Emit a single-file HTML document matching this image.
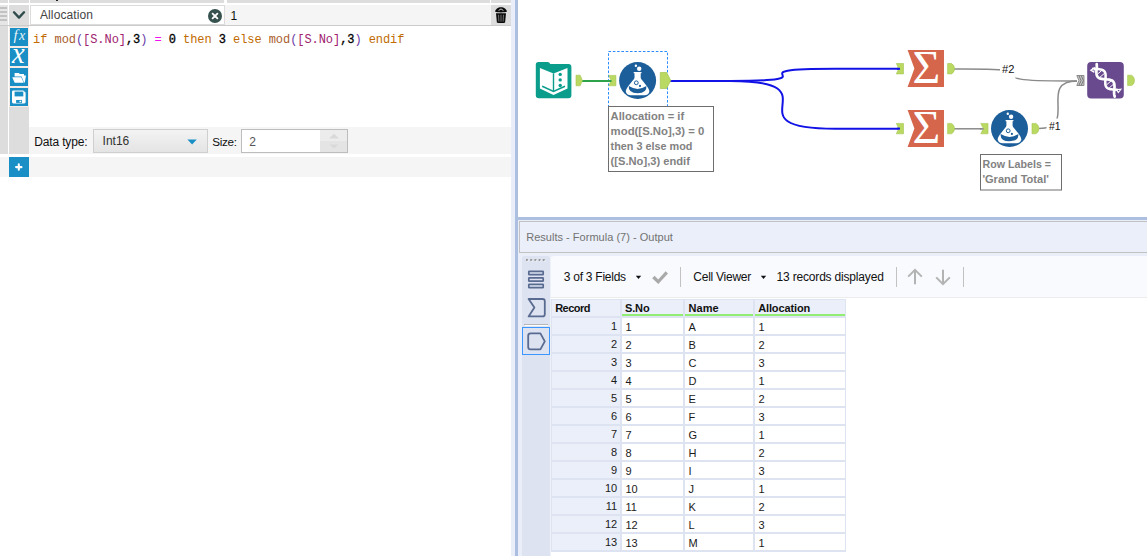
<!DOCTYPE html>
<html lang="en">
<head>
<meta charset="utf-8">
<title>Formula (7) - Configuration</title>
<style>
html,body{margin:0;padding:0;}
body{width:1147px;height:556px;position:relative;overflow:hidden;background:#fff;
  font-family:"Liberation Sans",sans-serif;font-size:12px;color:#1a1a1a;}
.a{position:absolute;}
.t{position:absolute;white-space:nowrap;line-height:16px;}
.g{background:#dddddd;}
.btn{position:absolute;left:9px;width:18px;height:18px;border:1px solid #f7ebe5;background:#1a8fc6;}
.code{font-family:"Liberation Mono",monospace;font-size:12px;letter-spacing:-0.063px;}
.kw{color:#c06a00;}
.fn{color:#a95c2c;}
.pr{color:#6a3aa8;}
.fd{color:#a0226e;}
.op{color:#f010f0;}
.nm{color:#000;-webkit-text-stroke:0.3px #000;}
/* results grid */
.grid{position:absolute;left:551px;top:299px;width:295px;height:253px;background:#dde3f0;}
.c{position:absolute;height:16px;line-height:16px;font-size:11px;white-space:nowrap;overflow:hidden;}
.h{background:#eaeff9;font-weight:bold;color:#111;}
.rn{background:#eaeff9;text-align:right;}
.d{background:#fff;}
.c span{position:relative;}
</style>
</head>
<body>

<!-- ================= LEFT: formula configuration ================= -->
<div class="a" id="config" style="left:0;top:0;width:511px;height:556px;background:#fff;">
  <!-- cut-off strip of the header above -->
  <div class="a g" style="left:0;top:0;width:8px;height:3px;"></div>
  <div class="a g" style="left:9px;top:0;width:20px;height:3px;"></div>
  <div class="a g" style="left:30px;top:0;width:194px;height:3px;"></div>
  <div class="a g" style="left:227px;top:0;width:263px;height:3px;"></div>
  <div class="a g" style="left:491px;top:0;width:20px;height:3px;"></div>
  <div class="a" style="left:56px;top:0;width:2px;height:1px;background:#222;"></div>

  <!-- expression header row -->
  <div class="a" style="left:0;top:5px;width:8px;height:20px;background:#e6e6e6;">
    <div class="a" style="left:0;top:2px;width:7px;height:2px;background:#c2c2c2;"></div>
    <div class="a" style="left:0;top:6px;width:7px;height:2px;background:#c2c2c2;"></div>
    <div class="a" style="left:0;top:10px;width:7px;height:2px;background:#c2c2c2;"></div>
    <div class="a" style="left:0;top:14px;width:7px;height:2px;background:#c2c2c2;"></div>
  </div>
  <div class="a g" style="left:9px;top:5px;width:20px;height:20px;">
    <svg class="a" style="left:0;top:0" width="20" height="20" viewBox="0 0 20 20"><path d="M5 7.3 L10 12.6 L15 7.3" fill="none" stroke="#2f4b4b" stroke-width="2.4" stroke-linecap="round" stroke-linejoin="round"/></svg>
  </div>
  <div class="a" style="left:30px;top:5px;width:193px;height:18px;background:#fff;border:1px solid #dcdcdc;">
    <div class="t" id="t_field" style="left:9px;top:0.85px;font-size:12px;letter-spacing:0.1px;color:#444;">Allocation</div>
    <svg class="a" style="left:177px;top:3px" width="14" height="14" viewBox="0 0 14 14"><circle cx="7" cy="7" r="7" fill="#36524f"/><path d="M4.6 4.6 L9.4 9.4 M9.4 4.6 L4.6 9.4" stroke="#fff" stroke-width="1.8" stroke-linecap="round"/></svg>
  </div>
  <div class="a" style="left:225px;top:5px;width:266px;height:20px;background:#f5f5f5;">
    <div class="t" id="t_prev" style="left:5.5px;top:2.9px;font-size:12px;color:#111;">1</div>
  </div>
  <div class="a g" style="left:491px;top:5px;width:20px;height:20px;">
    <svg class="a" style="left:3px;top:1px" width="14" height="18" viewBox="0 0 14 18">
      <path d="M1 5.5 C1.4 3.2 4 1.2 7 1.2 C10 1.2 12.6 3.2 13 5.5 C11 6.7 3 6.7 1 5.5 Z" fill="#0a0a0a"/>
      <path d="M4.6 4.5 L7 2.9 L9.4 4.5" fill="none" stroke="#d0d0d0" stroke-width="1"/>
      <path d="M2 7.3 L12 7.3 L11.1 16.4 C10 17.3 4 17.3 2.9 16.4 Z" fill="#0a0a0a"/>
      <path d="M4.5 8.8 L4.9 15.6 M7 8.8 L7 15.8 M9.5 8.8 L9.1 15.6" stroke="#6a6a6a" stroke-width="1.1"/>
    </svg>
  </div>
  <div class="a" style="left:0;top:25px;width:511px;height:1px;background:#cbcbcb;"></div>

  <!-- left gutters -->
  <div class="a g" style="left:0;top:26px;width:8px;height:128px;"></div>
  <div class="a g" style="left:9px;top:26px;width:20px;height:128px;"></div>

  <!-- editor side buttons -->
  <div class="btn" style="top:27px;">
    <svg class="a" style="left:0;top:0" width="18" height="18" viewBox="0 0 18 18"><text x="3.6" y="12.2" font-family="Liberation Serif, serif" font-style="italic" font-size="15" fill="#fff" fill-opacity="0.92">f</text><text x="8.9" y="12.1" font-family="Liberation Serif, serif" font-style="italic" font-size="14" fill="#fff" fill-opacity="0.92">x</text></svg>
  </div>
  <div class="btn" style="top:47px;">
    <svg class="a" style="left:0;top:0" width="18" height="18" viewBox="0 0 18 18"><text x="2" y="14.6" font-family="Liberation Serif, serif" font-style="italic" font-size="28.5" fill="#fff">x</text></svg>
  </div>
  <div class="btn" style="top:67px;">
    <svg class="a" style="left:0;top:0" width="18" height="18" viewBox="0 0 18 18">
      <path d="M4.6 4.9 L8.8 4.9 L9.8 6 L14 6 L14 7.5 L16 7.5 L14.8 14.6 L14 14.6 L11.6 8.5 L4.6 8.5 Z" fill="#fff"/>
      <path d="M2.2 9.3 L11.3 9.3 L13.7 14.7 L4.7 14.7 Z" fill="#fff"/>
    </svg>
  </div>
  <div class="btn" style="top:87px;">
    <svg class="a" style="left:0;top:0" width="18" height="18" viewBox="0 0 18 18">
      <path d="M3.4 2.4 L13.2 2.4 L15.6 4.6 L15.6 14.1 Q15.6 15.5 14.2 15.5 L3.4 15.5 Q2 15.5 2 14.1 L2 3.8 Q2 2.4 3.4 2.4 Z" fill="#fff"/>
      <rect x="4.6" y="3.6" width="8.7" height="4.8" fill="#1a8fc6"/>
      <rect x="6.1" y="12" width="5.9" height="2.9" fill="#1a8fc6"/>
      <rect x="9.5" y="12.7" width="1.7" height="1.5" fill="#fff"/>
    </svg>
  </div>

  <!-- expression text -->
  <div class="t code" id="t_code" style="left:33.1px;top:31.8px;"><span class="kw">if</span> <span class="fn">mod</span><span class="pr">(</span><span class="fd">[S.No]</span><span class="nm">,3</span><span class="pr">)</span> <span class="op">=</span> <span class="nm">0</span> <span class="kw">then</span> <span class="nm">3</span> <span class="kw">else</span> <span class="fn">mod</span><span class="pr">(</span><span class="fd">[S.No]</span><span class="nm">,3</span><span class="pr">)</span> <span class="kw">endif</span></div>

  <!-- data type row -->
  <div class="a" style="left:29px;top:127px;width:482px;height:27px;background:#f5f5f5;">
    <div class="t" id="t_dt" style="left:5.3px;top:6.8px;font-size:12px;letter-spacing:-0.16px;color:#111;">Data type:</div>
    <div class="a" style="left:64px;top:2px;width:113px;height:22px;border:1px solid #cfcfcf;background:linear-gradient(#f3f3f3,#e4e4e4);">
      <div class="t" id="t_int" style="left:8.6px;top:3px;font-size:12px;color:#333;">Int16</div>
      <svg class="a" style="left:93px;top:9px" width="12" height="7" viewBox="0 0 12 7"><path d="M0.4 0.6 L9.8 0.6 L5.1 5.4 Z" fill="#1a8fc6"/></svg>
    </div>
    <div class="t" id="t_size" style="left:183.2px;top:7px;font-size:11.7px;letter-spacing:-0.32px;color:#111;">Size:</div>
    <div class="a" style="left:212px;top:2px;width:105px;height:22px;border:1px solid #bdbdbd;background:#fff;">
      <div class="t" id="t_two" style="left:7.3px;top:3.8px;font-size:12px;color:#555;">2</div>
      <div class="a" style="left:78px;top:0;width:27px;height:11px;background:#ececec;"></div>
      <div class="a" style="left:78px;top:11px;width:27px;height:11px;background:#e4e4e4;"></div>
      <svg class="a" style="left:78px;top:0" width="27" height="22" viewBox="0 0 27 22"><path d="M9 8.6 L14 3.8 L19 8.6 Z" fill="#d9d9d9"/><path d="M9.6 14.4 L18.4 14.4 L14 18.6 Z" fill="#d9d9d9"/></svg>
    </div>
  </div>

  <!-- add expression row -->
  <div class="a" style="left:0;top:157px;width:511px;height:20px;background:#f5f5f5;">
    <div class="a" style="left:9px;top:0;width:20px;height:20px;background:#1a8fc6;">
      <svg class="a" style="left:0;top:0" width="20" height="20" viewBox="0 0 20 20"><path d="M9.8 7.4 L9.8 12.8 M7.1 10.1 L12.5 10.1" stroke="#fff" stroke-width="2.1" stroke-linecap="round"/></svg>
    </div>
  </div>
</div>

<!-- vertical splitter -->
<div class="a" style="left:511px;top:0;width:4px;height:556px;background:#e9eef9;"></div>
<div class="a" style="left:515px;top:0;width:3px;height:556px;background:#adbfe1;"></div>

<!-- ================= CANVAS ================= -->
<svg class="a" id="canvas" style="left:518px;top:0" width="629" height="217" viewBox="518 0 629 217" font-family="Liberation Sans, sans-serif">
  <defs>
    <!-- formula flask icon, centred on 0,0 (r=18.5) -->
    <g id="flask">
      <circle r="18.5" fill="#1b5e9a"/>
      <path d="M-3.9 -8.6 H3.9 V-7.3 H3.1 V-2.6 C4.6 0.6 12.9 8 11.7 11.6 C11 14.2 9.2 14.8 7 14.8 H-7 C-9.2 14.8 -11 14.2 -11.7 11.6 C-12.9 8 -4.6 0.6 -3.1 -2.6 V-7.3 H-3.9 Z" fill="#fff"/>
      <path d="M-8.8 5.6 Q0 11.2 8.8 5.6 Q9.6 12.7 0 12.7 Q-9.6 12.7 -8.8 5.6 Z" fill="#1b5e9a"/>
      <circle cx="-1.3" cy="2.3" r="1.9" fill="none" stroke="#1b5e9a" stroke-width="1"/>
      <circle cx="2.4" cy="5.4" r="1.1" fill="#1b5e9a"/>
      <circle cx="-1.7" cy="-14.8" r="1.2" fill="#fff"/>
      <circle cx="1.6" cy="-11.7" r="2.2" fill="#fff"/>
    </g>
    <!-- summarize icon, origin at top-left (36x37) -->
    <g id="sum">
      <path d="M0 0 L36.4 0 L36.4 37 L0 37 L6.8 18.5 Z" fill="#d5664b"/>
      <text x="4.8" y="33.4" font-family="Liberation Serif, serif" font-size="46.5" fill="#fff" textLength="27.8" lengthAdjust="spacingAndGlyphs">Σ</text>
    </g>
    <!-- anchors -->
    <path id="ain" d="M0 0 L7.2 0 L7.2 10.4 L0 10.4 L2.5 5.2 Z" fill="#b9d963" stroke="#a2c44e" stroke-width="0.6"/>
    <path id="aout" d="M0 0 L3.9 0 Q6.9 1.5 6.9 5.2 Q6.9 8.9 3.9 10.4 L0 10.4 Z" fill="#b9d963" stroke="#a2c44e" stroke-width="0.6"/>
  </defs>

  <!-- wires -->
  <path d="M582 81 L610 81" stroke="#2fa34c" stroke-width="2" fill="none"/>
  <path d="M666 81 L730 81 C840 81 725 68.8 835 68.8 L899.5 68.8" stroke="#1212e6" stroke-width="2" fill="none"/>
  <path d="M666 81 L730 81 C840 81 725 128.7 835 128.7 L899.5 128.7" stroke="#1212e6" stroke-width="2" fill="none"/>
  <path d="M954 69 L963 69 C1073 69 958 81 1068 81 L1077 81" stroke="#8a8a8a" stroke-width="1.5" fill="none"/>
  <path d="M1039 128.5 C1079 128.5 1037 81 1077 81" stroke="#8a8a8a" stroke-width="1.5" fill="none"/>
  <path d="M954 128.8 L982 128.8" stroke="#8a8a8a" stroke-width="1.5" fill="none"/>

  <!-- connection labels -->
  <rect x="1000" y="62" width="17" height="15.6" fill="#fff"/>
  <text id="s_n2" x="1002" y="72.8" font-size="11.5" fill="#111" textLength="12.4" lengthAdjust="spacingAndGlyphs">#2</text>
  <rect x="1046.5" y="118.5" width="16" height="14.5" fill="#fff"/>
  <text id="s_n1" x="1049" y="130" font-size="11.5" fill="#111" textLength="11.6" lengthAdjust="spacingAndGlyphs">#1</text>

  <!-- Input Data tool -->
  <path d="M538.5 62 L547.6 62 Q549.6 62 550.2 64 L568.5 64 Q571.4 64 571.4 66.9 L571.4 95.2 Q571.4 98.2 568.5 98.2 L538.8 98.2 Q535.8 98.2 535.8 95.2 L535.8 64.8 Q535.8 62 538.5 62 Z" fill="#0a9d8c"/>
  <path d="M539.9 68 L553.5 73.4 L567.5 68 L567.5 88.6 L553.5 95 L539.9 88.6 Z" fill="#fff"/>
  <path d="M553.5 73.4 L553.5 91.2" stroke="#0a9d8c" stroke-width="1.4" fill="none"/>
  <path d="M542.2 86.2 L553.5 91.4 L565 86.2" stroke="#0a9d8c" stroke-width="1.5" fill="none"/>
  <circle cx="560.2" cy="74.4" r="1.7" fill="#0a9d8c"/>
  <circle cx="560.2" cy="79.9" r="1.7" fill="#0a9d8c"/>
  <circle cx="560.2" cy="85.5" r="1.7" fill="#0a9d8c"/>
  <path d="M576 75.2 L580.2 75.2 L582.4 80.5 L580.2 85.8 L576 85.8 Z" fill="#b9d963" stroke="#a2c44e" stroke-width="0.6"/>

  <!-- Formula tool (selected) -->
  <rect x="608.5" y="51.5" width="59" height="55" fill="none" stroke="#2b8cff" stroke-width="1" stroke-dasharray="2.6 1.7"/>
  <use href="#ain" x="608.7" y="75.4"/>
  <path d="M608 81 L611.5 81" stroke="#2fa34c" stroke-width="2" fill="none"/>
  <use href="#flask" x="637.6" y="80.5"/>
  <path d="M660.3 72.5 L666.6 72.5 L670.8 80.5 L666.6 88.5 L660.3 88.5 Z" fill="#b9d963" stroke="#a2c44e" stroke-width="0.7"/>

  <!-- annotation 1 -->
  <rect x="608.5" y="106.5" width="105" height="65" fill="#fff" stroke="#6e6e6e" stroke-width="1"/>
  <g font-size="11" font-weight="bold" fill="#828282">
    <text id="s_a1" x="610.6" y="119.6" textLength="73.6" lengthAdjust="spacingAndGlyphs">Allocation = if</text>
    <text id="s_a2" x="610.6" y="134.7" textLength="93.7" lengthAdjust="spacingAndGlyphs">mod([S.No],3) = 0</text>
    <text id="s_a3" x="610.6" y="149.9" textLength="81.9" lengthAdjust="spacingAndGlyphs">then 3 else mod</text>
    <text id="s_a4" x="610.6" y="165" textLength="79.3" lengthAdjust="spacingAndGlyphs">([S.No],3) endif</text>
  </g>

  <!-- Summarize tools -->
  <use href="#ain" x="896.3" y="63.5"/>
  <path d="M897 68.8 L900 68.8" stroke="#1212e6" stroke-width="2" fill="none"/>
  <use href="#sum" x="907.6" y="50"/>
  <use href="#aout" x="947.6" y="63.5"/>

  <use href="#ain" x="896.3" y="123.4"/>
  <path d="M897 128.6 L900 128.6" stroke="#1212e6" stroke-width="2" fill="none"/>
  <use href="#sum" x="907.6" y="110"/>
  <use href="#aout" x="947.6" y="123.4"/>

  <!-- Formula tool 2 -->
  <use href="#ain" x="980.8" y="123.4"/>
  <path d="M980 128.8 L983.6 128.8" stroke="#8a8a8a" stroke-width="1.5" fill="none"/>
  <use href="#flask" x="1009.5" y="128.5"/>
  <use href="#aout" x="1032" y="123.4"/>

  <!-- annotation 2 -->
  <rect x="980.5" y="154.5" width="81" height="35.5" fill="#fff" stroke="#6e6e6e" stroke-width="1"/>
  <g font-size="11" font-weight="bold" fill="#828282">
    <text id="s_b1" x="982.6" y="167.5" textLength="68.4" lengthAdjust="spacingAndGlyphs">Row Labels =</text>
    <text id="s_b2" x="982.4" y="182.7" textLength="66.5" lengthAdjust="spacingAndGlyphs">'Grand Total'</text>
  </g>

  <!-- Union / Make Group (purple DNA) tool -->
  <path d="M1076.8 75.5 L1084 75.5 L1084 85.5 L1076.8 85.5 L1078.9 80.5 Z" fill="#c6c6c6" stroke="#787878" stroke-width="0.8"/>
  <path d="M1079 75.8 L1081.1 80.5 L1079 85.2 M1081.3 75.8 L1083.4 80.5 L1081.3 85.2" stroke="#707070" stroke-width="0.9" fill="none"/>
  <rect x="1087.2" y="62" width="36.6" height="36.6" rx="4" ry="4" fill="#694a8e"/>
  <g fill="none" stroke="#fff" stroke-linecap="round" stroke-linejoin="round">
    <path d="M1096.7 64.1 L1096.8 65.5 L1096.8 66.9 L1096.7 68.3 L1096.5 69.8 L1096.4 71.2 L1096.4 72.6 L1096.5 73.9 L1096.7 75.1 L1097.1 76.1 L1097.7 77.0 L1098.5 77.7 L1099.4 78.3 L1100.5 78.7 L1101.8 78.9 L1103.2 79.1 L1104.7 79.2 L1106.1 79.3 L1107.6 79.5 L1109.0 79.6 L1110.3 79.9 L1111.4 80.3 L1112.4 80.8 L1113.2 81.5 L1113.8 82.4 L1114.2 83.4 L1114.4 84.6 L1114.5 85.9 L1114.5 87.3 L1114.4 88.7 L1114.3 90.2 L1114.1 91.6 L1114.1 93.0 L1114.2 94.4 L1114.4 95.6 L1114.7 96.6" stroke-width="2.7"/>
    <path d="M1093.1 68.7 L1094.4 68.8 L1095.7 68.9 L1097.0 69.0 L1098.3 69.1 L1099.5 69.3 L1100.7 69.4 L1101.8 69.7 L1102.8 70.1 L1103.6 70.6 L1104.3 71.2 L1104.8 72.0 L1105.2 72.8 L1105.5 73.8 L1105.6 74.9 L1105.6 76.1 L1105.6 77.4 L1105.5 78.6 L1105.4 80.0 L1105.3 81.2 L1105.3 82.5 L1105.3 83.7 L1105.4 84.8 L1105.7 85.8 L1106.1 86.6 L1106.6 87.4 L1107.3 88.0 L1108.1 88.5 L1109.1 88.9 L1110.2 89.2 L1111.4 89.3 L1112.6 89.5 L1113.9 89.6 L1115.2 89.7 L1116.5 89.8 L1117.8 89.9" stroke-width="2.5"/>
    <path d="M1101.4 70.8 L1097.6 74.0 M1104.2 73.6 L1100.0 77.2 M1110.7 81.3 L1106.6 84.8 M1113.2 84.4 L1109.4 87.8" stroke-width="1"/>
  </g>
  <path d="M1089.6 70.3 L1095 67 L1094.2 73 Z" fill="#fff"/>
  <path d="M1092.2 70.2 L1093.8 69.2 L1093.5 71 Z" fill="#694a8e"/>
  <path d="M1122.2 88.6 L1115.6 89.2 L1118.3 93.6 Z" fill="#fff"/>
  <path d="M1119.6 89.9 L1117.6 90.1 L1118.5 91.5 Z" fill="#694a8e"/>
  <use href="#aout" x="1127.6" y="75.2"/>
</svg>
<!-- ================= RESULTS ================= -->
<div class="a" style="left:518px;top:217px;width:629px;height:3px;background:#adbfe1;"></div>
<div class="a" id="results" style="left:518px;top:220px;width:629px;height:336px;background:#e9eef9;">
  <div class="a" style="left:1px;top:1px;width:640px;height:30px;border:1px solid #c2c2c2;background:#eaeff9;">
    <div class="t" id="t_title" style="left:6.2px;top:6.8px;font-size:11px;letter-spacing:0.02px;color:#727272;">Results - Formula (7) - Output</div>
  </div>
  <div class="a" style="left:4px;top:36px;width:28px;height:300px;background:#dde3f0;border-radius:3px 3px 0 0;">
    <svg class="a" style="left:0;top:0" width="28" height="110" viewBox="0 0 28 110">
      <g fill="#989898"><rect x="4" y="3" width="2" height="2"/><rect x="8.2" y="3" width="2" height="2"/><rect x="12.4" y="3" width="2" height="2"/><rect x="16.6" y="3" width="2" height="2"/><rect x="20.8" y="3" width="2" height="2"/></g>
      <g fill="#f4f6fb"><rect x="5.4" y="4.4" width="1.2" height="1.2"/><rect x="9.6" y="4.4" width="1.2" height="1.2"/><rect x="13.8" y="4.4" width="1.2" height="1.2"/><rect x="18" y="4.4" width="1.2" height="1.2"/><rect x="22.2" y="4.4" width="1.2" height="1.2"/></g>
      <g fill="none" stroke="#5a6b92" stroke-width="1.7"><rect x="6.8" y="15.3" width="14.4" height="3.4" rx="0.5"/><rect x="6.8" y="21.8" width="14.4" height="3.4" rx="0.5"/><rect x="6.8" y="28.3" width="14.4" height="3.4" rx="0.5"/></g>
      <path d="M6.6 43 L20.6 43 Q22.8 43 22.8 45.2 L22.8 58.2 Q22.8 60.4 20.6 60.4 L6.6 60.4 L12.4 51.6 Z" fill="none" stroke="#5a6b92" stroke-width="1.8" stroke-linejoin="round"/>
      <rect x="2" y="68" width="24" height="1" fill="#b5b5b5"/><rect x="3" y="69" width="23" height="1" fill="#fff"/>
      <rect x="0.5" y="71.5" width="27" height="27" fill="none" stroke="#3b97ff" stroke-width="1"/>
      <path d="M8.6 77.4 L18.4 77.4 L22.8 85.4 L18.4 93.4 L8.6 93.4 Q6.2 93.4 6.2 91 L6.2 79.8 Q6.2 77.4 8.6 77.4 Z" fill="none" stroke="#5a6b92" stroke-width="1.8" stroke-linejoin="round"/>
    </svg>
  </div>
  <div class="a" style="left:32px;top:36px;width:1px;height:300px;background:#eef1f8;"></div>
  <div class="a" style="left:33px;top:78px;width:596px;height:258px;background:#fff;"></div>
  <div class="a" style="left:33px;top:36px;width:596px;height:41px;background:#f8fafe;border-radius:3px 0 0 0;">
    <div class="t" id="t_f1" style="left:12.8px;top:12.6px;font-size:12px;letter-spacing:-0.26px;color:#111;">3 of 3 Fields</div>
    <svg class="a" style="left:84px;top:19px" width="8" height="5" viewBox="0 0 8 5"><path d="M0.8 0.8 L6.2 0.8 L3.5 4 Z" fill="#111"/></svg>
    <svg class="a" style="left:100px;top:14px" width="18" height="15" viewBox="0 0 18 15"><path d="M1.2 8.2 L3.6 5.8 L7.2 9.4 L14.6 1.2 L17 3.4 L7.3 14 Z" fill="#a9a9a9"/></svg>
    <div class="a" style="left:129px;top:11px;width:1px;height:20px;background:#c2c2c2;"></div>
    <div class="t" id="t_f2" style="left:142.3px;top:12.6px;font-size:12px;letter-spacing:-0.25px;color:#111;">Cell Viewer</div>
    <svg class="a" style="left:209px;top:19px" width="8" height="5" viewBox="0 0 8 5"><path d="M0.8 0.8 L6.2 0.8 L3.5 4 Z" fill="#111"/></svg>
    <div class="t" id="t_f3" style="left:225.6px;top:12.6px;font-size:12px;letter-spacing:-0.185px;color:#111;">13 records displayed</div>
    <div class="a" style="left:345px;top:11px;width:1px;height:20px;background:#c2c2c2;"></div>
    <svg class="a" style="left:355px;top:12px" width="46" height="18" viewBox="0 0 46 18"><g fill="none" stroke="#b3b3b3" stroke-width="2"><path d="M9 16.2 L9 2.4 M2.2 8.6 L9 1.8 L15.8 8.6"/><path d="M37 1.8 L37 15.6 M30.2 9.4 L37 16.2 L43.8 9.4"/></g></svg>
    <div class="a" style="left:412px;top:11px;width:1px;height:20px;background:#c2c2c2;"></div>
  </div>
  <div class="a" style="left:33px;top:77px;width:596px;height:1px;background:#ececec;"></div>
</div>
<div class="grid">
  <div class="c h" style="left:1px;top:1px;width:68px;"><span id="t_h0" style="left:3.2px;top:-0.3px;letter-spacing:-0.53px;">Record</span></div>
  <div class="c h" style="left:71px;top:1px;width:61px;"><span id="t_h1" style="left:3px;top:-0.3px;letter-spacing:-0.15px;">S.No</span></div>
  <div class="a" style="left:71px;top:15px;width:61px;height:2px;background:#92ee72;"></div>
  <div class="c h" style="left:134px;top:1px;width:68px;"><span id="t_h2" style="left:3.6px;top:-0.3px;letter-spacing:0px;">Name</span></div>
  <div class="a" style="left:134px;top:15px;width:68px;height:2px;background:#92ee72;"></div>
  <div class="c h" style="left:204px;top:1px;width:90px;"><span id="t_h3" style="left:3.2px;top:-0.3px;letter-spacing:-0.13px;">Allocation</span></div>
  <div class="a" style="left:204px;top:15px;width:90px;height:2px;background:#92ee72;"></div>
  <div class="c rn" style="left:1px;top:19px;width:68px;"><span style="right:2.8px;top:0.1px;">1</span></div>
  <div class="c d" style="left:71px;top:19px;width:61px;"><span style="left:3.4px;top:0.9px;">1</span></div>
  <div class="c d" style="left:134px;top:19px;width:68px;"><span style="left:3.6px;top:0.9px;">A</span></div>
  <div class="c d" style="left:204px;top:19px;width:90px;"><span style="left:3.4px;top:0.9px;">1</span></div>
  <div class="c rn" style="left:1px;top:37px;width:68px;"><span style="right:2.8px;top:0.1px;">2</span></div>
  <div class="c d" style="left:71px;top:37px;width:61px;"><span style="left:3.4px;top:0.9px;">2</span></div>
  <div class="c d" style="left:134px;top:37px;width:68px;"><span style="left:3.6px;top:0.9px;">B</span></div>
  <div class="c d" style="left:204px;top:37px;width:90px;"><span style="left:3.4px;top:0.9px;">2</span></div>
  <div class="c rn" style="left:1px;top:55px;width:68px;"><span style="right:2.8px;top:0.1px;">3</span></div>
  <div class="c d" style="left:71px;top:55px;width:61px;"><span style="left:3.4px;top:0.9px;">3</span></div>
  <div class="c d" style="left:134px;top:55px;width:68px;"><span style="left:3.6px;top:0.9px;">C</span></div>
  <div class="c d" style="left:204px;top:55px;width:90px;"><span style="left:3.4px;top:0.9px;">3</span></div>
  <div class="c rn" style="left:1px;top:73px;width:68px;"><span style="right:2.8px;top:0.1px;">4</span></div>
  <div class="c d" style="left:71px;top:73px;width:61px;"><span style="left:3.4px;top:0.9px;">4</span></div>
  <div class="c d" style="left:134px;top:73px;width:68px;"><span style="left:3.6px;top:0.9px;">D</span></div>
  <div class="c d" style="left:204px;top:73px;width:90px;"><span style="left:3.4px;top:0.9px;">1</span></div>
  <div class="c rn" style="left:1px;top:91px;width:68px;"><span style="right:2.8px;top:0.1px;">5</span></div>
  <div class="c d" style="left:71px;top:91px;width:61px;"><span style="left:3.4px;top:0.9px;">5</span></div>
  <div class="c d" style="left:134px;top:91px;width:68px;"><span style="left:3.6px;top:0.9px;">E</span></div>
  <div class="c d" style="left:204px;top:91px;width:90px;"><span style="left:3.4px;top:0.9px;">2</span></div>
  <div class="c rn" style="left:1px;top:109px;width:68px;"><span style="right:2.8px;top:0.1px;">6</span></div>
  <div class="c d" style="left:71px;top:109px;width:61px;"><span style="left:3.4px;top:0.9px;">6</span></div>
  <div class="c d" style="left:134px;top:109px;width:68px;"><span style="left:3.6px;top:0.9px;">F</span></div>
  <div class="c d" style="left:204px;top:109px;width:90px;"><span style="left:3.4px;top:0.9px;">3</span></div>
  <div class="c rn" style="left:1px;top:127px;width:68px;"><span style="right:2.8px;top:0.1px;">7</span></div>
  <div class="c d" style="left:71px;top:127px;width:61px;"><span style="left:3.4px;top:0.9px;">7</span></div>
  <div class="c d" style="left:134px;top:127px;width:68px;"><span style="left:3.6px;top:0.9px;">G</span></div>
  <div class="c d" style="left:204px;top:127px;width:90px;"><span style="left:3.4px;top:0.9px;">1</span></div>
  <div class="c rn" style="left:1px;top:145px;width:68px;"><span style="right:2.8px;top:0.1px;">8</span></div>
  <div class="c d" style="left:71px;top:145px;width:61px;"><span style="left:3.4px;top:0.9px;">8</span></div>
  <div class="c d" style="left:134px;top:145px;width:68px;"><span style="left:3.6px;top:0.9px;">H</span></div>
  <div class="c d" style="left:204px;top:145px;width:90px;"><span style="left:3.4px;top:0.9px;">2</span></div>
  <div class="c rn" style="left:1px;top:163px;width:68px;"><span style="right:2.8px;top:0.1px;">9</span></div>
  <div class="c d" style="left:71px;top:163px;width:61px;"><span style="left:3.4px;top:0.9px;">9</span></div>
  <div class="c d" style="left:134px;top:163px;width:68px;"><span style="left:3.6px;top:0.9px;">I</span></div>
  <div class="c d" style="left:204px;top:163px;width:90px;"><span style="left:3.4px;top:0.9px;">3</span></div>
  <div class="c rn" style="left:1px;top:181px;width:68px;"><span style="right:2.8px;top:0.1px;">10</span></div>
  <div class="c d" style="left:71px;top:181px;width:61px;"><span style="left:3.4px;top:0.9px;">10</span></div>
  <div class="c d" style="left:134px;top:181px;width:68px;"><span style="left:3.6px;top:0.9px;">J</span></div>
  <div class="c d" style="left:204px;top:181px;width:90px;"><span style="left:3.4px;top:0.9px;">1</span></div>
  <div class="c rn" style="left:1px;top:199px;width:68px;"><span style="right:2.8px;top:0.1px;">11</span></div>
  <div class="c d" style="left:71px;top:199px;width:61px;"><span style="left:3.4px;top:0.9px;">11</span></div>
  <div class="c d" style="left:134px;top:199px;width:68px;"><span style="left:3.6px;top:0.9px;">K</span></div>
  <div class="c d" style="left:204px;top:199px;width:90px;"><span style="left:3.4px;top:0.9px;">2</span></div>
  <div class="c rn" style="left:1px;top:217px;width:68px;"><span style="right:2.8px;top:0.1px;">12</span></div>
  <div class="c d" style="left:71px;top:217px;width:61px;"><span style="left:3.4px;top:0.9px;">12</span></div>
  <div class="c d" style="left:134px;top:217px;width:68px;"><span style="left:3.6px;top:0.9px;">L</span></div>
  <div class="c d" style="left:204px;top:217px;width:90px;"><span style="left:3.4px;top:0.9px;">3</span></div>
  <div class="c rn" style="left:1px;top:235px;width:68px;"><span style="right:2.8px;top:0.1px;">13</span></div>
  <div class="c d" style="left:71px;top:235px;width:61px;"><span style="left:3.4px;top:0.9px;">13</span></div>
  <div class="c d" style="left:134px;top:235px;width:68px;"><span style="left:3.6px;top:0.9px;">M</span></div>
  <div class="c d" style="left:204px;top:235px;width:90px;"><span style="left:3.4px;top:0.9px;">1</span></div>
</div>

</body>
</html>
